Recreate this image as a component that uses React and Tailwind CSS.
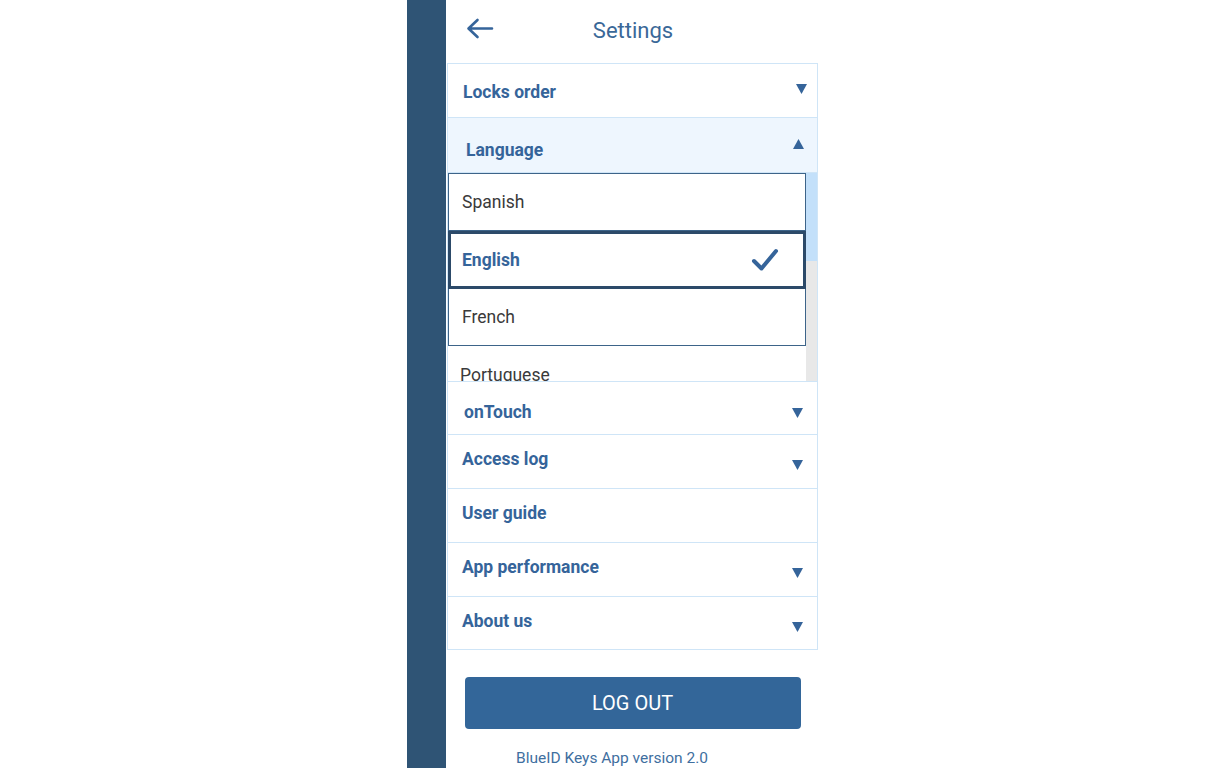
import React from "react";

const font = { fontFamily: "Roboto, 'Noto Sans', sans-serif" };

const Triangle = ({ up = false, className = "" }) => (
  <svg width="11" height="10" viewBox="0 0 11 10" className={className}>
    {up ? (
      <polygon points="5.5,0 11,10 0,10" fill="#35649a" />
    ) : (
      <polygon points="0,0 11,0 5.5,10" fill="#35649a" />
    )}
  </svg>
);

// One collapsible settings row
const Row = ({ label, h, textTop, textLeft, arrowTop, arrowRight, arrow = true }) => (
  <div className={`flex items-start justify-between border-b border-[#cfe5f7] bg-white ${h}`}>
    <span className={`text-[17.5px] font-bold text-[#35649a] leading-[20px] ${textTop} ${textLeft}`}>{label}</span>
    {arrow && <Triangle className={`${arrowTop} ${arrowRight}`} />}
  </div>
);

const LanguageList = () => (
  <div className="flex h-[209px] overflow-hidden border-b border-[#cfe5f7]">
    <div className="flex w-[359px] flex-col">
      <div className="flex h-[58px] shrink-0 items-center border border-[#3d6489] pl-[13px] text-[17.5px] text-[#3a3a3a]">
        Spanish
      </div>
      <div className="flex h-[58px] shrink-0 items-center justify-between border-[3px] border-[#2c4a69] pl-[11px] pr-[24px]">
        <span className="text-[17.5px] font-bold text-[#35649a]">English</span>
        <svg width="28" height="24" viewBox="0 0 28 24">
          <path d="M3 13 L10.5 20.5 L25 3" fill="none" stroke="#35649a" strokeWidth="4" strokeLinecap="round" strokeLinejoin="round" />
        </svg>
      </div>
      <div className="flex h-[57px] shrink-0 items-center border border-t-0 border-[#3d6489] pl-[13px] text-[17.5px] text-[#3a3a3a]">
        French
      </div>
      <div className="h-[58px] shrink-0 pl-[12px] pt-[19px] text-[17.5px] leading-[20px] text-[#3a3a3a]">Portuguese</div>
    </div>
    <div className="flex w-[11px] flex-col">
      <div className="h-[88px] bg-[#c3e0fa]" />
      <div className="flex-1 bg-[#e8e8e8]" />
    </div>
  </div>
);

export default function App() {
  return (
    <div className="flex h-[768px] w-[1224px] overflow-hidden bg-white" style={font}>
      <div className="w-[407px] shrink-0" />
      <div className="h-full w-[39px] shrink-0 bg-[#2f5475]" />
      <div className="flex w-[372px] shrink-0 flex-col">
        {/* Header */}
        <div className="relative flex h-[63px] shrink-0 items-center justify-center">
          <svg width="28" height="21" viewBox="0 0 28 21" className="absolute left-[20px] top-[18px]">
            <path d="M26 10.5 H3 M11.5 2 L2.5 10.5 L11.5 19" fill="none" stroke="#35649a" strokeWidth="2.6" strokeLinecap="round" strokeLinejoin="round" />
          </svg>
          <span className="mb-[3px] ml-[2px] text-[22px] text-[#3a6898]">Settings</span>
        </div>

        {/* Rows */}
        <div className="ml-[1px] w-[371px] border-x border-t border-[#cfe5f7]">
          <Row label="Locks order" h="h-[54px]" textTop="mt-[18px]" textLeft="ml-[15px]" arrowTop="mt-[20px]" arrowRight="mr-[10px]" />
          <div className="flex h-[55px] items-start justify-between border-b border-[#cfe5f7] bg-[#eef6fe]">
            <span className="ml-[18px] mt-[22px] text-[17.5px] font-bold leading-[20px] text-[#35649a]">Language</span>
            <Triangle up className="mr-[13px] mt-[21px]" />
          </div>
          <LanguageList />
          <Row label="onTouch" h="h-[53px]" textTop="mt-[20px]" textLeft="ml-[16px]" arrowTop="mt-[26px]" arrowRight="mr-[14px]" />
          <Row label="Access log" h="h-[54px]" textTop="mt-[14px]" textLeft="ml-[14px]" arrowTop="mt-[25px]" arrowRight="mr-[14px]" />
          <Row label="User guide" h="h-[54px]" textTop="mt-[14px]" textLeft="ml-[14px]" arrow={false} />
          <Row label="App performance" h="h-[54px]" textTop="mt-[14px]" textLeft="ml-[14px]" arrowTop="mt-[25px]" arrowRight="mr-[14px]" />
          <Row label="About us" h="h-[53px]" textTop="mt-[14px]" textLeft="ml-[14px]" arrowTop="mt-[25px]" arrowRight="mr-[14px]" />
        </div>

        {/* Log out */}
        <div className="mt-[27px] flex justify-center pl-[1px]">
          <button className="h-[52px] w-[336px] rounded-[4px] bg-[#336699] text-[20px] text-white">LOG OUT</button>
        </div>
        <div className="mt-[18px] pr-[40px] text-center text-[15.5px] text-[#3f6f9f]">BlueID Keys App version 2.0</div>
      </div>
    </div>
  );
}
